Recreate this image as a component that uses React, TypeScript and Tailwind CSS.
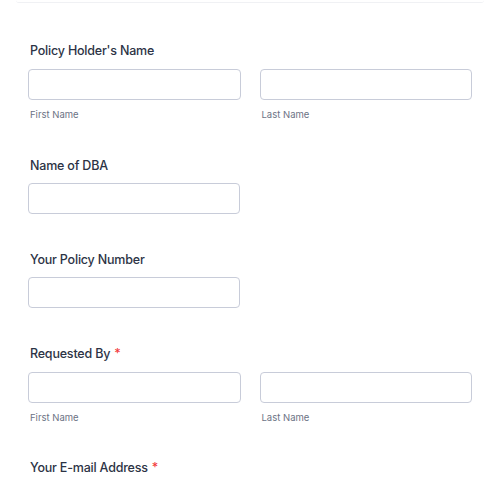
import React from "react";

const Star = () => <span className="text-[#f23a3c] ml-[4px]">*</span>;

function Label({ children }: { children: React.ReactNode }) {
  return (
    <div className="h-[20px] leading-[21px] text-[12.5px] font-medium tracking-[-0.2px] text-[#2c3345]">{children}</div>
  );
}

function Input() {
  return <div className="h-[31px] w-full rounded-[4px] border border-[#c8ccd9] bg-white" />;
}

function Sub({ children }: { children: React.ReactNode }) {
  return <div className="mt-[5px] h-[20px] leading-[20px] text-[9.5px] text-[#6c7385] pl-[2px]">{children}</div>;
}

export default function App() {
  return (
    <div className="w-[500px] h-[484px] bg-white overflow-hidden" style={{ fontFamily: "Inter, 'Noto Sans', sans-serif" }}>
      <div className="mx-[16px] h-[3px] border-b border-[#f0f1f4] rounded-b-[3px]" />
      <div className="px-[28px] pt-[37px]">
        <div className="h-[115px]">
          <div className="pl-[2px]"><Label>Policy Holder's Name</Label></div>
          <div className="mt-[9px] grid grid-cols-2 gap-[19px]">
            <div><Input /><Sub>First Name</Sub></div>
            <div><Input /><Sub>Last Name</Sub></div>
          </div>
        </div>
        <div className="h-[94px]">
          <div className="pl-[2px]"><Label>Name of DBA</Label></div>
          <div className="mt-[8px] w-[212px]"><Input /></div>
        </div>
        <div className="h-[94px]">
          <div className="pl-[2px]"><Label>Your Policy Number</Label></div>
          <div className="mt-[8px] w-[212px]"><Input /></div>
        </div>
        <div className="h-[114px]">
          <div className="pl-[2px]"><Label>Requested By<Star /></Label></div>
          <div className="mt-[9px] grid grid-cols-2 gap-[19px]">
            <div><Input /><Sub>First Name</Sub></div>
            <div><Input /><Sub>Last Name</Sub></div>
          </div>
        </div>
        <div>
          <div className="pl-[2px]"><Label>Your E-mail Address<Star /></Label></div>
        </div>
      </div>
    </div>
  );
}
